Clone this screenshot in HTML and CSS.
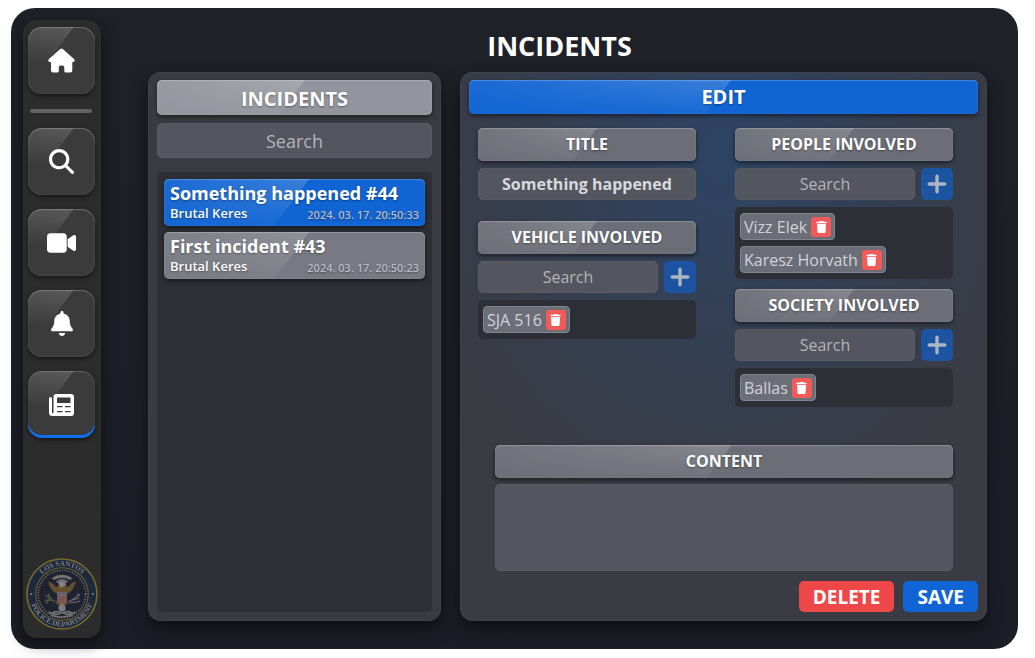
FILE: index.html
```html
<!DOCTYPE html>
<html lang="en">
<head>
  <meta charset="UTF-8">
  <meta name="viewport" content="width=device-width, initial-scale=1.0">
  <title>Incidents</title>
  <link rel="stylesheet" href="styles.css">
</head>
<body>

  <!-- Shared icons -->
  <svg class="sprite" aria-hidden="true">
    <symbol id="trash" viewBox="0 0 448 512">
      <path d="M135 18L128 32H32C14 32 0 46 0 64S14 96 32 96H416c18 0 32-14 32-32s-14-32-32-32H320l-7-14C307 7 296 0 284 0H164c-12 0-23 7-29 18zM416 128H32L53 467c2 25 23 45 48 45H347c25 0 46-20 48-45L416 128z"/>
    </symbol>
    <symbol id="plus" viewBox="0 0 18 18">
      <path d="M9 2V16M2 9H16" fill="none" stroke="currentColor" stroke-width="3" stroke-linecap="round"/>
    </symbol>
  </svg>

  <div class="tablet">

    <nav class="sidebar">
      <button class="nav-btn gloss" aria-label="Home">
        <svg width="27" height="25" viewBox="0 0 27 25">
          <path d="M13.500 0.500Q14.300 0.500 15 1.200L26.300 11.200Q27.500 13.500 25.300 14H24.300V22.500Q24.300 24.500 22.300 24.500H17.800Q16.300 24.500 16.300 23V19.500Q16.300 17.500 14.500 17.500H12.500Q10.800 17.500 10.800 19.500V23Q10.800 24.500 9.300 24.500H5Q3 24.500 3 22.500V14H1.700Q-0.500 13.500 0.700 11.200L12 1.200Q12.700 0.500 13.500 0.500Z"/>
        </svg>
      </button>

      <hr class="divider">

      <button class="nav-btn gloss" aria-label="Search">
        <svg width="25" height="25" viewBox="0 0 512 512">
          <path d="M416 208c0 46-15 88-40 123L503 457c12 13 12 33 0 46s-33 12-46 0L331 376c-35 25-77 40-123 40C93 416 0 323 0 208S93 0 208 0S416 93 416 208zM208 352a144 144 0 1 0 0-288 144 144 0 1 0 0 288z"/>
        </svg>
      </button>
      <button class="nav-btn gloss" aria-label="Cameras">
        <svg width="29" height="26" viewBox="0 0 576 512">
          <path d="M0 128C0 93 29 64 64 64H328c35 0 64 29 64 64V384c0 35-29 64-64 64H64c-35 0-64-29-64-64V128zM559 100c10 5 17 16 17 28V384c0 12-7 23-17 28s-23 5-33-1l-96-64L410 330V182L430 165l96-64c10-6 22-7 33-1z"/>
        </svg>
      </button>
      <button class="nav-btn gloss" aria-label="Alerts">
        <svg width="22" height="25" viewBox="0 0 448 512">
          <path d="M224 0c-18 0-32 14-32 32V51C119 66 64 131 64 208v19c0 47-17 92-48 127l-8 9c-8 9-10 23-5 34S19 416 32 416H416c13 0 24-7 29-19s3-25-5-34l-8-9C401 319 384 274 384 227V208c0-77-55-142-128-157V32c0-18-14-32-32-32zm45 493c12-12 19-28 19-45H160c0 17 7 33 19 45s28 19 45 19s33-7 45-19z"/>
        </svg>
      </button>
      <button class="nav-btn gloss active" aria-label="Incidents">
        <svg width="25" height="22" viewBox="0 0 25 22">
          <path fill-rule="evenodd" d="M7.500 0H22Q25 0 25 3V19Q25 22 22 22H3.500Q0 22 0 18.500V4.500Q0 3 1.500 3T3 4.500V18.500Q3 19.200 3.700 19.200T4.500 18.500V3Q4.500 0 7.500 0ZM8 3.500V9H21.500V3.500ZM8 12V13.300H13.500V12ZM16 12V13.300H21.500V12ZM8 17V18.300H13.500V17ZM16 17V18.300H21.500V17Z"/>
        </svg>
      </button>

      <svg class="seal" viewBox="0 0 140 140" role="img" aria-label="Los Santos Police Department">
        <defs>
          <path id="arcTop" d="M15 70A55 55 0 0 1 125 70"/>
          <path id="arcBottom" d="M7 70A63 63 0 0 0 133 70"/>
        </defs>
        <circle cx="70" cy="70" r="68" fill="#10274f" stroke="#c5ae2c" stroke-width="3"/>
        <circle cx="70" cy="70" r="51" fill="#131b36" stroke="#b59d35" stroke-width="2"/>
        <circle cx="70" cy="70" r="46" fill="none" stroke="#c9c9c9" stroke-width="3" stroke-dasharray="2 3"/>
        <text class="seal-text"><textPath href="#arcTop" startOffset="50%">LOS SANTOS</textPath></text>
        <text class="seal-text"><textPath href="#arcBottom" startOffset="50%">POLICE DEPARTMENT</textPath></text>
        <circle cx="10" cy="70" r="2" fill="#ddd"/>
        <circle cx="130" cy="70" r="2" fill="#ddd"/>
        <path d="M50 39Q70 26 90 39L86 43Q70 34 54 43Z" fill="#bbb"/>
        <path d="M58 45Q70 37 82 45L77 50H63Z" fill="#aaa"/>
        <path d="M64 70Q48 68 43 45Q55 50 59 57Q63 54 64 50H76Q77 54 81 57Q85 50 97 45Q92 68 76 70L82 88L70 96L58 88Z" fill="#9c7432"/>
        <path d="M64 48Q70 43 75 49L79 52L73 54Q70 60 66 56Z" fill="#ddd"/>
        <path d="M61 67H79V79Q77 87 70 90Q63 87 61 79Z" fill="#e4c5c8"/>
        <path d="M61 67H79V72H61Z" fill="#9299b5"/>
        <path d="M64 73V84M68 73V88M72 73V88M76 73V84" stroke="#b83843" stroke-width="2"/>
        <path d="M57 86L38 72M51 82L36 82M48 79L43 69M45 80L39 89" stroke="#6d8044" stroke-width="3" fill="none"/>
        <path d="M83 86L103 72M83 84L104 78M85 88L105 84M99 69L105 73" stroke="#aaa" stroke-width="2" fill="none"/>
        <circle cx="70" cy="97" r="7" fill="#c9c9c9"/>
        <path d="M44 105Q56 113 68 107Q57 101 50 108M96 105Q84 113 72 107Q83 101 90 108M49 112L67 115L91 112" fill="none" stroke="#bbb" stroke-width="3"/>
      </svg>
    </nav>

    <main class="page">
      <h1>INCIDENTS</h1>

      <div class="panels">
        <section class="panel incidents">
          <h2 class="bar bar-light gloss">INCIDENTS</h2>
          <input class="field field-big" type="text" placeholder="Search" aria-label="Search incidents">
          <div class="list">
            <button class="incident gloss selected">
              <span class="incident-title">Something happened #44</span>
              <span class="incident-info"><span>Brutal Keres</span><time>2024. 03. 17. 20:50:33</time></span>
            </button>
            <button class="incident gloss">
              <span class="incident-title">First incident #43</span>
              <span class="incident-info"><span>Brutal Keres</span><time>2024. 03. 17. 20:50:23</time></span>
            </button>
          </div>
        </section>

        <form class="panel edit" onsubmit="return false">
          <h2 class="bar bar-blue gloss">EDIT</h2>

          <div class="columns">
            <div class="column">
              <div class="group group-title">
                <label class="label gloss" for="title">TITLE</label>
                <input class="field bold" id="title" type="text" value="Something happened">
              </div>
              <div class="group">
                <label class="label gloss" for="vehicle">VEHICLE INVOLVED</label>
                <div class="search-row">
                  <input class="field" id="vehicle" type="text" placeholder="Search">
                  <button class="add" aria-label="Add vehicle"><svg><use href="#plus"/></svg></button>
                </div>
                <div class="tags">
                  <div class="tag">SJA 516 <button class="remove" aria-label="Remove SJA 516"><svg><use href="#trash"/></svg></button></div>
                </div>
              </div>
            </div>

            <div class="column">
              <div class="group">
                <label class="label gloss" for="people">PEOPLE INVOLVED</label>
                <div class="search-row">
                  <input class="field" id="people" type="text" placeholder="Search">
                  <button class="add" aria-label="Add person"><svg><use href="#plus"/></svg></button>
                </div>
                <div class="tags">
                  <div class="tag">Vizz Elek <button class="remove" aria-label="Remove Vizz Elek"><svg><use href="#trash"/></svg></button></div>
                  <div class="tag">Karesz Horvath <button class="remove" aria-label="Remove Karesz Horvath"><svg><use href="#trash"/></svg></button></div>
                </div>
              </div>
              <div class="group">
                <label class="label gloss" for="society">SOCIETY INVOLVED</label>
                <div class="search-row">
                  <input class="field" id="society" type="text" placeholder="Search">
                  <button class="add" aria-label="Add society"><svg><use href="#plus"/></svg></button>
                </div>
                <div class="tags">
                  <div class="tag">Ballas <button class="remove" aria-label="Remove Ballas"><svg><use href="#trash"/></svg></button></div>
                </div>
              </div>
            </div>
          </div>

          <div class="content">
            <label class="label gloss" for="content">CONTENT</label>
            <textarea class="field" id="content"></textarea>
          </div>

          <div class="actions">
            <button class="action delete">DELETE</button>
            <button class="action save">SAVE</button>
          </div>
        </form>
      </div>
    </main>

  </div>

</body>
</html>
```
FILE: styles.css
```css
* {
  box-sizing: border-box;
}
body {
  margin: 0;
  padding: 8px 17px 9px 11px;
  min-height: 100vh;
  display: flex;
  background: #fff;
  color: #fff;
  font-family: "Segoe UI", "Open Sans", "Noto Sans", sans-serif;
}
button, input, textarea {
  font-family: inherit;
  color: inherit;
  border: none;
  padding: 0;
  margin: 0;
}
button {
  cursor: pointer;
}
h1, h2 {
  margin: 0;
}
svg {
  fill: currentColor;
}
.sprite {
  position: absolute;
  width: 0;
  height: 0;
}
.tablet {
  flex: 1;
  display: flex;
  gap: 47px;
  padding: 12px 31px 11px 12px;
  border-radius: 24px;
  background: linear-gradient(#1e2128, #1c1e27);
}

/* diagonal shine on bars and buttons */
.gloss {
  position: relative;
  box-shadow: 0 2px 4px rgba(0, 0, 0, 0.5), inset 0 1px 1px rgba(255, 255, 255, 0.2), inset 0 0 1px rgba(255, 255, 255, 0.4);
  text-shadow: 0 1px 2px rgba(0, 0, 0, 0.4);
}
.gloss::before {
  content: "";
  position: absolute;
  inset: 0;
  border-radius: inherit;
  background: linear-gradient(127deg, rgba(255, 255, 255, 0.04), rgba(255, 255, 255, 0.18) 49%, transparent 49%);
  mask-image: linear-gradient(#000, rgba(0, 0, 0, 0.2));
  pointer-events: none;
}

/* Sidebar */
.sidebar {
  width: 78px;
  display: flex;
  flex-direction: column;
  align-items: flex-start;
  gap: 14px;
  padding: 7px 5px 8px;
  border-radius: 14px;
  background: #2c2c2c;
  box-shadow: 0 6px 16px rgba(0, 0, 0, 0.5);
}
.nav-btn {
  width: 67px;
  height: 67px;
  display: flex;
  align-items: center;
  justify-content: center;
  border-radius: 14px;
  background-color: #3b3b3b;
}
.nav-btn::before {
  background: linear-gradient(127deg, rgba(255, 255, 255, 0.12), rgba(255, 255, 255, 0.16) 39%, transparent 39%);
  mask-image: linear-gradient(#000, transparent 55%);
}
.nav-btn.active {
  box-shadow: 0 2px 4px rgba(0, 0, 0, 0.5), inset 0 1px 1px rgba(255, 255, 255, 0.2), inset 0 -3px 0 #0f6fee;
}
.divider {
  width: 62px;
  height: 4px;
  margin: 1px 2px;
  border: none;
  border-radius: 2px;
  background: #626262;
}
.seal {
  width: 72px;
  height: 72px;
  margin: auto -2px 0;
  flex-shrink: 0;
  opacity: 0.5;
}
.seal-text {
  font-family: "Liberation Serif", serif;
  font-size: 14px;
  font-weight: bold;
  text-anchor: middle;
  fill: #ccc;
}

/* Page */
.page {
  flex: 1;
  display: flex;
  flex-direction: column;
  padding-bottom: 17px;
}
h1 {
  height: 52px;
  padding-right: 16px;
  font-size: 27px;
  line-height: 52px;
  text-align: center;
}
.panels {
  flex: 1;
  display: grid;
  grid-template-columns: 293fr 527fr;
  gap: 19px;
}
.panel {
  display: flex;
  flex-direction: column;
  padding: 7px 8px 8px;
  border: 1px solid #42434a;
  border-radius: 12px;
  background: #3a3a42;
  box-shadow: 0 8px 16px rgba(0, 0, 0, 0.5);
}
.bar {
  height: 35px;
  line-height: 37px;
  font-size: 20px;
  text-align: center;
  border-radius: 5px;
}
.bar-light {
  background-color: #92959d;
}
.bar-blue {
  height: 34px;
  line-height: 33px;
  background-color: #1064d3;
}
.field {
  display: block;
  width: 100%;
  height: 32px;
  border: 1px solid #5a5c64;
  border-radius: 5px;
  background: #53565e;
  color: #d8d9dc;
  font-size: 16px;
  text-align: center;
  outline: none;
}
.field::placeholder {
  color: #b3b4b8;
  opacity: 1;
}
.field-big {
  height: 35px;
  margin: 8px 0 14px;
  font-size: 18px;
}
.bold {
  font-weight: bold;
}

/* Incident list */
.list {
  flex: 1;
  display: flex;
  flex-direction: column;
  gap: 6px;
  padding: 7px;
  border-radius: 5px;
  background: #2d2f37;
}
.incident {
  height: 47px;
  display: flex;
  flex-direction: column;
  justify-content: center;
  padding: 2px 6px 0;
  border-radius: 5px;
  background-color: #787a83;
  text-align: left;
}
.incident.selected {
  background-color: #1064d3;
}
.incident-title {
  font-size: 18px;
  font-weight: bold;
  line-height: 22px;
}
.incident-info {
  display: flex;
  justify-content: space-between;
  font-size: 13px;
  font-weight: 600;
  line-height: 18px;
}
.incident-info time {
  font-size: 11px;
  line-height: 21px;
  color: #b9bcc4;
}

/* Edit form */
.edit {
  background: radial-gradient(ellipse 60% 68% at 50% 15%, #2e4464, #3a3b43);
}
.columns {
  display: grid;
  grid-template-columns: 1fr 1fr;
  gap: 39px;
  padding: 14px 25px 0 9px;
}
.column {
  display: flex;
  flex-direction: column;
  gap: 10px;
}
.group {
  display: flex;
  flex-direction: column;
  gap: 7px;
}
.group-title {
  margin-bottom: 11px;
}
.label {
  height: 33px;
  line-height: 32px;
  font-size: 16px;
  font-weight: bold;
  text-align: center;
  border-radius: 5px;
  background-color: #6c6e77;
}
.search-row {
  display: flex;
  gap: 6px;
}
.search-row .field {
  flex: 1;
  min-width: 0;
}
.add {
  width: 32px;
  height: 32px;
  display: flex;
  align-items: center;
  justify-content: center;
  border-radius: 5px;
  background: #1c54a1;
  color: #adb5c0;
}
.add svg {
  width: 20px;
  height: 20px;
}
.tags {
  display: flex;
  flex-direction: column;
  align-items: flex-start;
  gap: 6px;
  padding: 6px 5px;
  border-radius: 5px;
  background: #2d2f37;
}
.tag {
  height: 27px;
  display: flex;
  align-items: center;
  gap: 4px;
  padding: 0 3px;
  border: 1px solid #83858d;
  border-radius: 4px;
  background: #6c6e77;
  color: #d0d3dc;
  font-size: 16px;
  font-weight: 500;
  line-height: 24px;
}
.remove {
  width: 20px;
  height: 20px;
  display: flex;
  align-items: center;
  justify-content: center;
  border-radius: 3px;
  background: #f25a5a;
  color: #fff;
}
.remove svg {
  width: 11px;
  height: 12px;
}
.content {
  display: flex;
  flex-direction: column;
  gap: 6px;
  margin-top: auto;
  padding: 0 25px 0 26px;
}
.content .field {
  height: 87px;
  padding: 6px;
  resize: none;
  text-align: left;
}
.actions {
  display: flex;
  justify-content: flex-end;
  gap: 9px;
  margin-top: 10px;
}
.action {
  height: 31px;
  padding: 0 14px;
  border-radius: 5px;
  font-size: 19px;
  font-weight: bold;
}
.delete {
  background: #ed4747;
}
.save {
  background: #1064d3;
}
```
